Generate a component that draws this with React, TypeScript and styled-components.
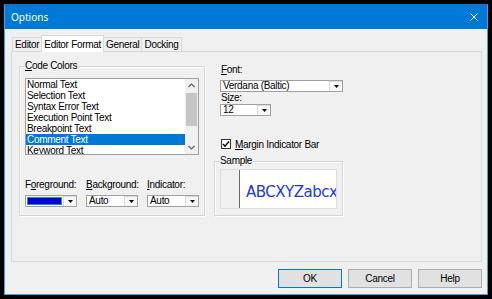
import React from "react";
import styled, { createGlobalStyle } from "styled-components";

const GlobalStyle = createGlobalStyle`
  * {
    box-sizing: border-box;
  }
  body {
    margin: 0;
    background: #000;
    font-family: "Liberation Sans", Arial, sans-serif;
  }
`;

const Window = styled.div`
  margin: 4px 0 0 4px;
  width: 484px;
  height: 291px;
  border: 1px solid #4a9de8;
  border-top-color: #0078d7;
  background: #f0f0f0;
  display: flex;
  flex-direction: column;
  font-size: 10px;
  letter-spacing: -0.3px;
  color: #000;
`;

const TitleBar = styled.div`
  height: 24px;
  flex: none;
  background: #0078d7;
  color: #fff;
  display: flex;
  align-items: center;
  justify-content: space-between;
  padding: 0 9px 0 6px;
  font-family: "Noto Sans", "Open Sans", sans-serif;
  font-size: 10px;
  letter-spacing: 0;
`;

const TabStrip = styled.div`
  display: flex;
  align-items: flex-end;
  height: 16px;
  margin: 6px 0 0 7px;
`;

const Tab = styled.div<{ $active?: boolean }>`
  position: relative;
  z-index: ${(p) => (p.$active ? 2 : 1)};
  height: ${(p) => (p.$active ? 17 : 14)}px;
  margin-bottom: ${(p) => (p.$active ? -1 : 0)}px;
  margin-left: -1px;
  padding: 0 2px;
  display: flex;
  align-items: center;
  white-space: nowrap;
  border: 1px solid #d9d9d9;
  border-bottom: none;
  background: ${(p) => (p.$active ? "#fff" : "#f0f0f0")};

  &:first-child {
    margin-left: 0;
  }
`;

const Panel = styled.div`
  height: 211px;
  margin: 0 5px 0 6px;
  border: 1px solid #d9d9d9;
  background: #f0f0f0;
  display: flex;
  align-items: flex-start;
  padding: 12px 0 0 7px;
`;

const GroupBox = styled.div<{ $w: number; $h: number }>`
  position: relative;
  width: ${(p) => p.$w}px;
  height: ${(p) => p.$h}px;
  border: 1px solid #d5d5d5;
  box-shadow: inset 1px 1px 0 #fff, 1px 1px 0 #fff;
`;

const CodeColorsBox = styled(GroupBox)`
  margin-top: 2px;
  padding: 11px 0 0 5px;
`;

const SampleGroup = styled(GroupBox)`
  margin-top: 11px;
  padding: 7px 0 0 5px;
`;

const GroupLabel = styled.span`
  position: absolute;
  top: -7px;
  left: 4px;
  padding: 0 1px;
  line-height: 12px;
  background: #f0f0f0;
`;

const Mnemonic = styled.span`
  text-decoration: underline;
`;

const ListBox = styled.div`
  width: 174px;
  height: 77px;
  border: 1px solid #a0a0a0;
  background: #fff;
  display: flex;
  overflow: hidden;
`;

const Items = styled.div`
  flex: 1;
  overflow: hidden;
`;

const Item = styled.div<{ $selected?: boolean }>`
  height: 11px;
  line-height: 11px;
  padding-left: 1px;
  white-space: nowrap;
  background: ${(p) => (p.$selected ? "#0078d7" : "transparent")};
  color: ${(p) => (p.$selected ? "#fff" : "#000")};
`;

const ScrollBar = styled.div`
  width: 13px;
  background: #f0f0f0;
  display: flex;
  flex-direction: column;
`;

const ScrollArrow = styled.div`
  height: 13px;
  flex: none;
  display: flex;
  align-items: center;
  justify-content: center;
`;

const Track = styled.div`
  flex: 1;
`;

const Thumb = styled.div`
  height: 33px;
  margin: 1px 1px 0 1px;
  background: #c6c6c6;
`;

const ColorRow = styled.div`
  display: grid;
  grid-template-columns: repeat(3, 52px);
  column-gap: 9px;
  margin-top: 24px;
`;

const Field = styled.div`
  display: flex;
  flex-direction: column;
`;

const FieldLabel = styled.div<{ $indent?: number }>`
  line-height: 12px;
  padding-left: ${(p) => p.$indent ?? 0}px;
  white-space: nowrap;
`;

const Combo = styled.div<{ $w: number; $indent?: number }>`
  width: ${(p) => p.$w}px;
  height: 12px;
  margin-left: ${(p) => p.$indent ?? 0}px;
  border: 1px solid #a0a0a0;
  background: #fff;
  display: flex;
`;

const SpacedCombo = styled(Combo)`
  margin-top: 4px;
`;

const ComboText = styled.div`
  flex: 1;
  padding-left: 2px;
  line-height: 10px;
  white-space: nowrap;
  overflow: hidden;
`;

const Swatch = styled.div`
  flex: 1;
  margin: 1px;
  border: 1px solid #2f86e0;
  background: #0000f4;
  box-shadow: inset 0 0 0 1px #0a0a90;
`;

const ComboButton = styled.div`
  width: 13px;
  flex: none;
  border: 1px solid #dadada;
  border-right: none;
  border-bottom: none;
  background: #f7f7f7;
  display: flex;
  align-items: center;
  justify-content: center;
`;

const RightCol = styled.div`
  width: 129px;
  margin-left: 9px;
  display: flex;
  flex-direction: column;
`;

const CheckRow = styled.div`
  margin-top: 22px;
  padding-left: 7px;
  height: 12px;
  display: flex;
  align-items: center;
  gap: 4px;
  white-space: nowrap;
`;

const CheckBox = styled.div`
  width: 10px;
  height: 10px;
  border: 1px solid #333;
  background: #fff;
  display: flex;
  align-items: center;
  justify-content: center;
`;

const SampleBox = styled.div`
  width: 117px;
  height: 40px;
  border: 1px solid #dcdcdc;
  background: #fff;
  display: flex;
  overflow: hidden;
`;

const MarginStrip = styled.div`
  width: 19px;
  flex: none;
  background: #f0f0f0;
  border-right: 1px solid #696969;
`;

const SampleText = styled.div`
  align-self: center;
  padding: 6px 0 0 6px;
  font-family: "DejaVu Sans", Verdana, sans-serif;
  font-size: 15px;
  letter-spacing: -0.5px;
  color: #1a3ae8;
  white-space: nowrap;
`;

const ButtonRow = styled.div`
  display: flex;
  justify-content: flex-end;
  gap: 6px;
  margin-top: 7px;
  padding-right: 5px;
`;

const Button = styled.button<{ $default?: boolean }>`
  width: 64px;
  height: 19px;
  padding: 0;
  border: 1px solid ${(p) => (p.$default ? "#0078d7" : "#adadad")};
  background: #e1e1e1;
  font: inherit;
  letter-spacing: inherit;
  color: #000;
`;

const Arrow = () => (
  <svg width="5" height="3" viewBox="0 0 5 3">
    <polygon points="0,0 5,0 2.5,3" fill="#000" />
  </svg>
);

const Chevron = ({ up }: { up?: boolean }) => (
  <svg width="7" height="5" viewBox="0 0 7 5">
    <polyline
      points={up ? "0.5,4 3.5,1 6.5,4" : "0.5,1 3.5,4 6.5,1"}
      fill="none"
      stroke="#606060"
      strokeWidth="1.2"
    />
  </svg>
);

const codeColors = [
  "Normal Text",
  "Selection Text",
  "Syntax Error Text",
  "Execution Point Text",
  "Breakpoint Text",
  "Comment Text",
  "Keyword Text",
];

function DropDown({ w, indent, value, spaced }: { w: number; indent?: number; value?: string; spaced?: boolean }) {
  const Box = spaced ? SpacedCombo : Combo;
  return (
    <Box $w={w} $indent={indent}>
      {value === undefined ? <Swatch /> : <ComboText>{value}</ComboText>}
      <ComboButton>
        <Arrow />
      </ComboButton>
    </Box>
  );
}

export default function App() {
  return (
    <>
      <GlobalStyle />
      <Window>
        <TitleBar>
          <span>Options</span>
          <svg width="8" height="8" viewBox="0 0 8 8">
            <path d="M0.5 0.5 L7.5 7.5 M7.5 0.5 L0.5 7.5" stroke="#fff" strokeWidth="1" />
          </svg>
        </TitleBar>

        <TabStrip>
          <Tab>Editor</Tab>
          <Tab $active>Editor Format</Tab>
          <Tab>General</Tab>
          <Tab>Docking</Tab>
        </TabStrip>

        <Panel>
          <CodeColorsBox $w={186} $h={150}>
            <GroupLabel>
              <Mnemonic>C</Mnemonic>ode Colors
            </GroupLabel>
            <ListBox>
              <Items>
                {codeColors.map((name) => (
                  <Item key={name} $selected={name === "Comment Text"}>
                    {name}
                  </Item>
                ))}
              </Items>
              <ScrollBar>
                <ScrollArrow>
                  <Chevron up />
                </ScrollArrow>
                <Track>
                  <Thumb />
                </Track>
                <ScrollArrow>
                  <Chevron />
                </ScrollArrow>
              </ScrollBar>
            </ListBox>

            <ColorRow>
              <Field>
                <FieldLabel>
                  F<Mnemonic>o</Mnemonic>reground:
                </FieldLabel>
                <DropDown w={52} spaced />
              </Field>
              <Field>
                <FieldLabel>
                  <Mnemonic>B</Mnemonic>ackground:
                </FieldLabel>
                <DropDown w={52} value="Auto" spaced />
              </Field>
              <Field>
                <FieldLabel>
                  <Mnemonic>I</Mnemonic>ndicator:
                </FieldLabel>
                <DropDown w={52} value="Auto" spaced />
              </Field>
            </ColorRow>
          </CodeColorsBox>

          <RightCol>
            <FieldLabel $indent={7}>
              <Mnemonic>F</Mnemonic>ont:
            </FieldLabel>
            <DropDown w={123} indent={6} value="Verdana (Baltic)" spaced />
            <FieldLabel $indent={7}>
              S<Mnemonic>i</Mnemonic>ze:
            </FieldLabel>
            <DropDown w={51} indent={6} value="12" />
            <CheckRow>
              <CheckBox>
                <svg width="8" height="8" viewBox="0 0 8 8">
                  <polyline points="1,4 3,6.2 7,1.5" fill="none" stroke="#000" strokeWidth="1.4" />
                </svg>
              </CheckBox>
              <span>
                <Mnemonic>M</Mnemonic>argin Indicator Bar
              </span>
            </CheckRow>
            <SampleGroup $w={129} $h={55}>
              <GroupLabel>Sample</GroupLabel>
              <SampleBox>
                <MarginStrip />
                <SampleText>ABCXYZabcxyz</SampleText>
              </SampleBox>
            </SampleGroup>
          </RightCol>
        </Panel>

        <ButtonRow>
          <Button $default>OK</Button>
          <Button>Cancel</Button>
          <Button>Help</Button>
        </ButtonRow>
      </Window>
    </>
  );
}
